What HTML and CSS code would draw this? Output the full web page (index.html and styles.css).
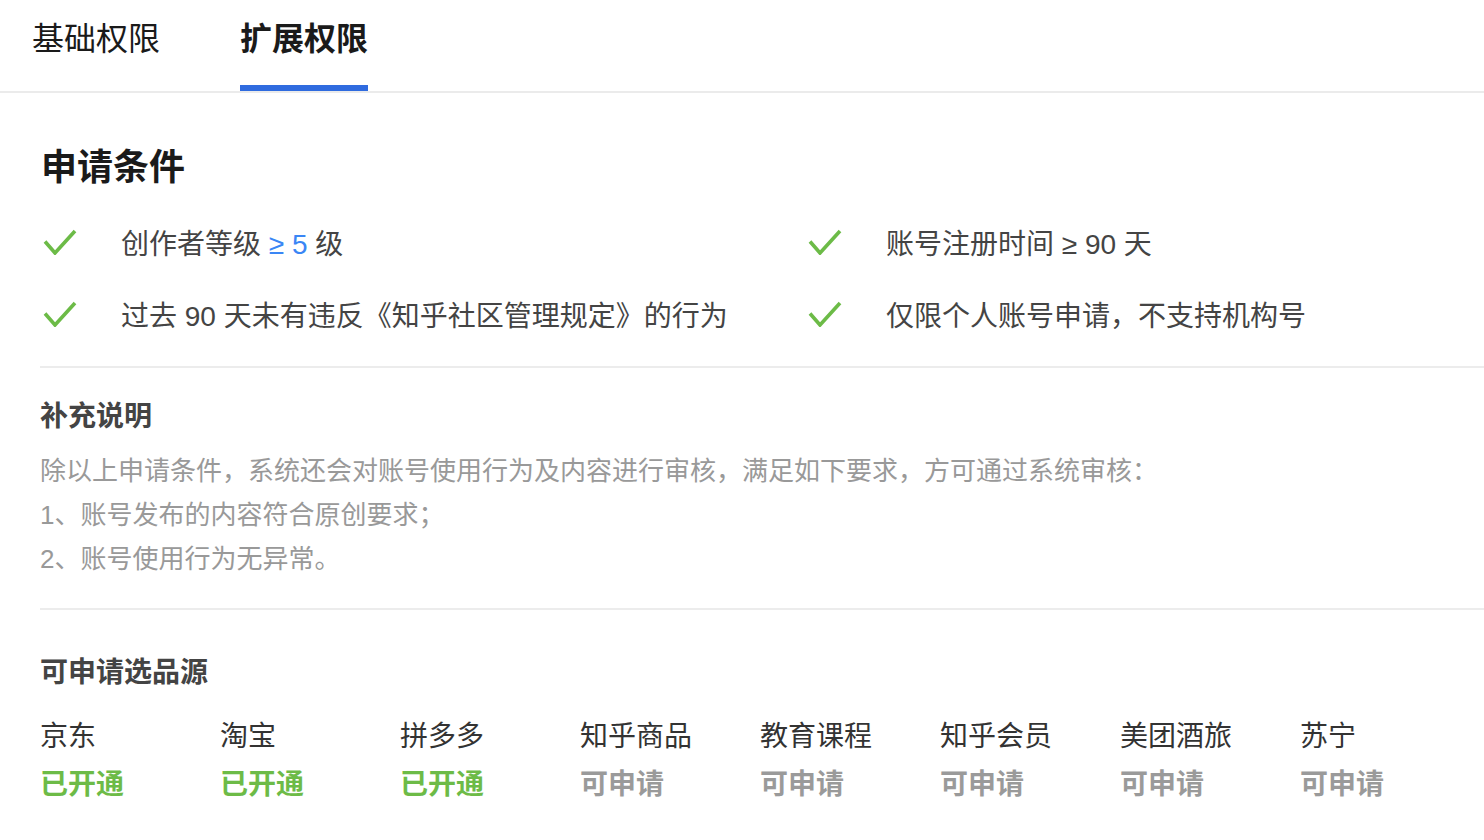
FILE: index.html
```html
<!DOCTYPE html>
<html lang="zh-CN">
<head>
    <meta charset="UTF-8">
    <meta name="viewport" content="width=device-width, initial-scale=1.0">
    <title>扩展权限</title>
    <link rel="stylesheet" href="styles.css">
</head>
<body>
    <div class="tabs">
        <div class="tab">基础权限</div>
        <div class="tab active">扩展权限</div>
    </div>

    <div class="content">
        <h2 class="title">申请条件</h2>
        <div class="conditions">
            <div class="cond">
                <svg class="check" viewBox="0 0 34 26"><polyline points="2,12.5 12,24 32,2"/></svg>
                <span>创作者等级 <span class="hl">≥ 5</span> 级</span>
            </div>
            <div class="cond">
                <svg class="check" viewBox="0 0 34 26"><polyline points="2,12.5 12,24 32,2"/></svg>
                <span>账号注册时间 ≥ 90 天</span>
            </div>
            <div class="cond">
                <svg class="check" viewBox="0 0 34 26"><polyline points="2,12.5 12,24 32,2"/></svg>
                <span>过去 90 天未有违反《知乎社区管理规定》的行为</span>
            </div>
            <div class="cond">
                <svg class="check" viewBox="0 0 34 26"><polyline points="2,12.5 12,24 32,2"/></svg>
                <span>仅限个人账号申请，不支持机构号</span>
            </div>
        </div>

        <div class="divider"></div>

        <h3 class="subtitle">补充说明</h3>
        <div class="notes">
            <p>除以上申请条件，系统还会对账号使用行为及内容进行审核，满足如下要求，方可通过系统审核：</p>
            <p>1、账号发布的内容符合原创要求；</p>
            <p>2、账号使用行为无异常。</p>
        </div>

        <div class="divider second"></div>

        <h3 class="subtitle">可申请选品源</h3>
        <div class="sources">
            <div class="source"><div class="name">京东</div><div class="status on">已开通</div></div>
            <div class="source"><div class="name">淘宝</div><div class="status on">已开通</div></div>
            <div class="source"><div class="name">拼多多</div><div class="status on">已开通</div></div>
            <div class="source"><div class="name">知乎商品</div><div class="status">可申请</div></div>
            <div class="source"><div class="name">教育课程</div><div class="status">可申请</div></div>
            <div class="source"><div class="name">知乎会员</div><div class="status">可申请</div></div>
            <div class="source"><div class="name">美团酒旅</div><div class="status">可申请</div></div>
            <div class="source"><div class="name">苏宁</div><div class="status">可申请</div></div>
        </div>
    </div>
</body>
</html>
```

FILE: styles.css
```css
body {
    margin: 0;
    background-color: #fff;
    font-family: "Liberation Sans", "Noto Sans CJK SC", sans-serif;
    color: #444;
}
.tabs {
    display: flex;
    gap: 80px;
    padding-left: 32px;
    border-bottom: 2px solid #ebebeb;
}
.tab {
    font-size: 32px;
    line-height: 32px;
    padding: 23px 0 30px;
    border-bottom: 6px solid transparent;
    color: #1a1a1a;
}
.tab.active {
    font-weight: bold;
    border-bottom-color: #2f6bdf;
}
.content {
    padding-left: 40px;
}
.title {
    margin: 57px 0 0 1px;
    font-size: 36px;
    line-height: 36px;
    color: #1a1a1a;
}
.conditions {
    display: grid;
    grid-template-columns: 765px 1fr;
    margin-top: 20px;
    padding-left: 3px;
}
.cond {
    display: flex;
    align-items: center;
    height: 72px;
    font-size: 28px;
    color: #444;
}
.check {
    width: 34px;
    height: 26px;
    margin-right: 44px;
    flex-shrink: 0;
}
.check polyline {
    fill: none;
    stroke: #6cbb47;
    stroke-width: 3.6;
}
.hl {
    color: #3a86f5;
}
.divider {
    height: 2px;
    background-color: #ececec;
    margin-top: 16px;
}
.divider.second {
    margin-top: 27px;
}
.subtitle {
    margin: 35px 0 0;
    font-size: 28px;
    line-height: 28px;
    color: #444;
}
.divider.second + .subtitle {
    margin-top: 49px;
}
.notes {
    margin-top: 18px;
}
.notes p {
    margin: 0;
    font-size: 26px;
    line-height: 44px;
    color: #999;
}
.sources {
    display: grid;
    grid-template-columns: repeat(8, 180px);
    margin-top: 36px;
}
.source .name {
    font-size: 28px;
    line-height: 28px;
    color: #333;
}
.source .status {
    margin-top: 20px;
    font-size: 28px;
    line-height: 28px;
    font-weight: bold;
    color: #9a9a9a;
}
.source .status.on {
    color: #6dbb47;
}
```
